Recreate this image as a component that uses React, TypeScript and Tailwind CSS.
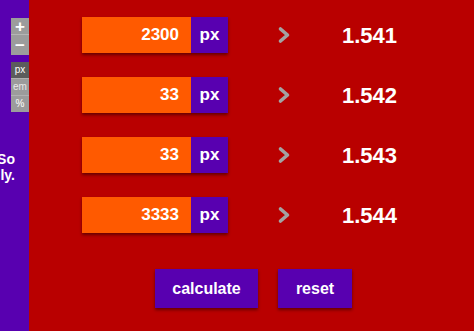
import React from 'react';

const ROWS = [
  { value: '2300', unit: 'px', result: '1.541' },
  { value: '33', unit: 'px', result: '1.542' },
  { value: '33', unit: 'px', result: '1.543' },
  { value: '3333', unit: 'px', result: '1.544' },
];

function Chevron() {
  return (
    <svg width="14" height="18" viewBox="0 0 14 18" className="shrink-0">
      <path d="M3.5 3 L10.5 9 L3.5 15" fill="none" stroke="#a3a3a3" strokeWidth="3.6" strokeLinecap="round" strokeLinejoin="round" />
    </svg>
  );
}

export default function App() {
  return (
    <div
      className="flex h-[331px] w-[474px] overflow-hidden bg-[#b90000] text-white"
      style={{ fontFamily: '"Liberation Sans", Arial, sans-serif' }}
    >
      {/* side panel, mostly off screen */}
      <div className="flex w-[29px] shrink-0 flex-col items-end bg-[#5800b0] pt-[18px]">
        <div className="flex w-[18px] flex-col">
          <div className="flex h-[17px] items-center justify-center border-b border-[#b5b5b5] bg-[#9c9c9c] text-[17px] font-bold leading-none">+</div>
          <div className="flex h-[20px] items-center justify-center bg-[#9c9c9c] text-[17px] font-bold leading-none">−</div>
          <div className="mt-[7px] flex h-[16px] items-center justify-center bg-[#5c5c5c] text-[10px] leading-none">px</div>
          <div className="flex h-[17px] items-center justify-center border-t border-[#b0b0b0] bg-[#9c9c9c] text-[10px] leading-none text-[#e8e8e8]">em</div>
          <div className="flex h-[17px] items-center justify-center border-t border-[#b0b0b0] bg-[#9c9c9c] text-[10px] leading-none">%</div>
        </div>
        <div className="mr-[14px] mt-[39px]">
          <p className="text-right text-[14px] font-bold leading-[16px]">
            So
            <br />
            lly.
          </p>
        </div>
      </div>

      {/* calculator */}
      <div className="flex flex-1 flex-col pt-[17px]">
        <div className="flex flex-col gap-[24px]">
          {ROWS.map((row, i) => (
            <div key={i} className="flex h-[36px] items-center">
              <div className="ml-[53px] flex h-[36px] shadow-[0_2px_3px_rgba(0,0,0,0.45)]">
                <div className="flex w-[109px] items-center justify-end bg-[#ff5a00] pr-[12px] text-[17px] font-bold">
                  {row.value}
                </div>
                <div className="flex w-[37px] items-center justify-center bg-[#5800b0] text-[17px] font-bold">
                  {row.unit}
                </div>
              </div>
              <div className="ml-[49px]">
                <Chevron />
              </div>
              <div className="ml-[51px] text-[22px] font-bold">{row.result}</div>
            </div>
          ))}
        </div>

        <div className="ml-[126px] mt-[36px] flex gap-[20px]">
          <button className="h-[39px] w-[103px] bg-[#5800b0] text-[16px] font-bold shadow-[0_2px_3px_rgba(0,0,0,0.45)]">
            calculate
          </button>
          <button className="h-[39px] w-[74px] bg-[#5800b0] text-[16px] font-bold shadow-[0_2px_3px_rgba(0,0,0,0.45)]">
            reset
          </button>
        </div>
      </div>
    </div>
  );
}
